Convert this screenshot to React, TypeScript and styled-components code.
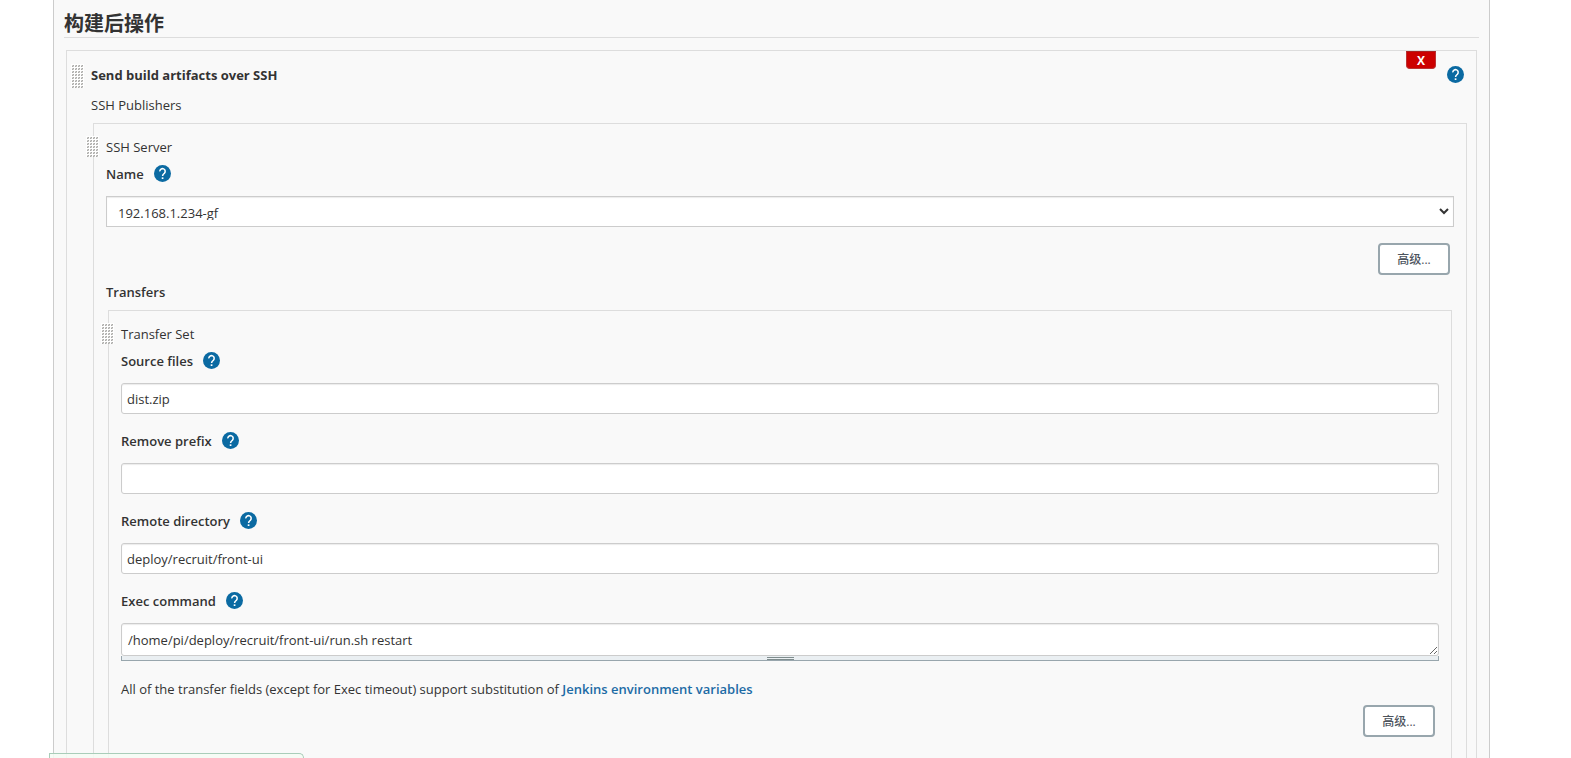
import React, { useId } from "react";
import styled, { createGlobalStyle } from "styled-components";

const GlobalStyle = createGlobalStyle`
  *, *::before, *::after { box-sizing: border-box; }
  body {
    margin: 0;
    background: #fff;
    color: #333;
    font: 13px/20px "Open Sans", "Noto Sans CJK SC", sans-serif;
  }
`;

const Page = styled.main`
  display: flex;
  flex-direction: column;
  min-height: 100vh;
  margin: 0 81px 0 53px;
  padding: 0 10px;
  background: #f9f9f9;
  border: solid #ccc;
  border-width: 0 1px;
`;

const SectionTitle = styled.h2`
  margin: 0 0 12px;
  padding: 10px 0 0;
  height: 38px;
  border-bottom: 1px solid #ddd;
  font-size: 20px;
  line-height: 28px;
  font-weight: 700;
`;

const Box = styled.section<{ $inset?: string }>`
  position: relative;
  flex: 1;
  display: flex;
  flex-direction: column;
  margin: ${(p) => p.$inset ?? "0 2px"};
  padding: 13px 12px 0;
  border: solid #ddd;
  border-width: 1px 1px 0;
`;

const StepBox = styled(Box)`
  padding: 14px 9px 0 24px;
`;

const Grip = styled.svg<{ $inner?: boolean }>`
  position: absolute;
  top: ${(p) => (p.$inner ? 12 : 13)}px;
  left: ${(p) => (p.$inner ? -8 : 4)}px;
`;

const StepTitle = styled.h3`
  margin: 0 0 10px;
  font-size: 13px;
  line-height: 20px;
  font-weight: 700;
`;

const Caption = styled.div<{ $strong?: boolean }>`
  line-height: 20px;
  font-weight: ${(p) => (p.$strong ? 600 : 400)};
`;

const DeleteButton = styled.button`
  position: absolute;
  top: 0;
  right: 40px;
  width: 30px;
  height: 18px;
  padding: 1px 0 0;
  border: 1px solid #b33;
  border-top-color: #a22;
  border-radius: 0 0 4px 4px;
  background: #c00;
  color: #fff;
  font: 700 12px/16px "Open Sans", sans-serif;
`;

const HelpButton = styled.button`
  display: block;
  width: 17px;
  height: 17px;
  padding: 0;
  border: 0;
  background: none;
`;

const StepHelp = styled.div`
  position: absolute;
  top: 15px;
  right: 12px;
`;

const FieldHead = styled.div`
  display: flex;
  align-items: center;
  gap: 10px;
  height: 24px;
  margin: 5px 0 10px;

  label { font-weight: 600; }
  button { margin-bottom: 2px; }
`;

const FieldGroup = styled.div`
  display: flex;
  flex-direction: column;
  margin-bottom: 10px;
`;

const TextInput = styled.input`
  width: 100%;
  height: 31px;
  padding: 0 5px;
  border: 1px solid #ccc;
  border-radius: 3px;
  background: #fff;
  box-shadow: inset 0 1px 1px rgba(0, 0, 0, 0.08);
  color: #333;
  font: inherit;
`;

const SelectWrap = styled.div`
  position: relative;
  display: flex;
`;

const Select = styled.select`
  appearance: none;
  width: 100%;
  height: 31px;
  padding: 6px 24px 6px 11px;
  border: 1px solid #ccc;
  border-radius: 0;
  background: #fff;
  box-shadow: inset 0 1px 1px rgba(0, 0, 0, 0.08);
  color: #333;
  font: inherit;
`;

const Chevron = styled.svg`
  position: absolute;
  right: 5px;
  top: 12px;
  pointer-events: none;
`;

const TextArea = styled.textarea`
  display: block;
  width: 100%;
  height: 33px;
  padding: 6px;
  border: 1px solid #ccc;
  border-radius: 3px;
  background: #fff;
  box-shadow: inset 0 1px 1px rgba(0, 0, 0, 0.08);
  color: #333;
  font: inherit;
  overflow: hidden;
  resize: vertical;
`;

const ResizeBar = styled.div`
  display: flex;
  flex-direction: column;
  align-items: center;
  gap: 1px;
  height: 5px;
  padding-top: 1px;
  border: solid #98a6ad;
  border-width: 0 1px 1px;
  background: #eaeff2;

  &::before, &::after {
    content: "";
    width: 27px;
    height: 1px;
    background: #7f8c8d;
  }
`;

const ButtonRow = styled.div`
  display: flex;
  justify-content: flex-end;
  padding: 6px 4px 7px 0;
`;

const AdvancedButton = styled.button`
  width: 72px;
  height: 32px;
  padding: 2px 0 0;
  border: 2px solid #98a6ad;
  border-radius: 4px;
  background: #fff;
  color: #4d545d;
  font: 500 12px/20px "Open Sans", "Noto Sans CJK SC", sans-serif;
`;

const Note = styled.p`
  margin: 8px 0 0;
  line-height: 20px;

  a {
    color: #1d6ba5;
    font-weight: 600;
    text-decoration: none;
  }
`;

const StatusBubble = styled.div`
  position: fixed;
  left: 49px;
  bottom: 0;
  width: 255px;
  height: 5px;
  border: solid #a9cdb9;
  border-width: 1px 1px 0;
  border-radius: 0 8px 0 0;
  background: rgba(246, 251, 244, 0.85);
`;

function DragGrip({ rows, inner }: { rows: number; inner?: boolean }) {
  const id = useId();
  return (
    <Grip $inner={inner} width="13" height={rows * 3} aria-hidden="true">
      <defs>
        <pattern id={id} width="3" height="3" patternUnits="userSpaceOnUse">
          <rect width="3" height="3" fill="#fff" />
          <rect x="1" y="1" width="2" height="2" fill="#d0cfcb" />
          <rect x="2" y="1" width="1" height="1" fill="#aaa" />
          <rect x="1" y="2" width="1" height="1" fill="#aaa" />
        </pattern>
      </defs>
      <rect width="13" height={rows * 3} fill={`url(#${id})`} />
    </Grip>
  );
}

function Help({ topic }: { topic: string }) {
  return (
    <HelpButton type="button" aria-label={`Help for ${topic}`}>
      <svg width="17" height="17" viewBox="0 0 24 24" display="block">
        <circle cx="12" cy="12" r="12" fill="#0b6aa2" />
        <path d="M8.2 9a3.8 3.8 0 1 1 6.3 2.8c-1.5 1.2-2.4 1.8-2.4 3.6" fill="none" stroke="#fff" strokeWidth="2.2" />
        <path d="M10.9 17.4h2.4v2.4h-2.4z" fill="#fff" />
      </svg>
    </HelpButton>
  );
}

function FieldLabel({ id, text }: { id: string; text: string }) {
  return (
    <FieldHead>
      <label htmlFor={id}>{text}</label>
      <Help topic={text} />
    </FieldHead>
  );
}

const transferFields = [
  { id: "source", label: "Source files", value: "dist.zip" },
  { id: "prefix", label: "Remove prefix", value: "" },
  { id: "remote", label: "Remote directory", value: "deploy/recruit/front-ui" },
];

export default function App() {
  return (
    <>
      <GlobalStyle />
      <Page>
        <SectionTitle>构建后操作</SectionTitle>
        <StepBox>
          <DragGrip rows={8} />
          <DeleteButton type="button">X</DeleteButton>
          <StepHelp>
            <Help topic="Send build artifacts over SSH" />
          </StepHelp>
          <StepTitle>Send build artifacts over SSH</StepTitle>
          <Caption>SSH Publishers</Caption>
          <Box $inset="8px 0 0 2px">
            <DragGrip rows={7} inner />
            <Caption>SSH Server</Caption>
            <FieldGroup>
              <FieldLabel id="server" text="Name" />
              <SelectWrap>
                <Select id="server" defaultValue="gf">
                  <option value="gf">192.168.1.234-gf</option>
                </Select>
                <Chevron width="10" height="7" viewBox="0 0 10 7">
                  <path d="M1 1l4 4 4-4" fill="none" stroke="#333" strokeWidth="2" />
                </Chevron>
              </SelectWrap>
            </FieldGroup>
            <ButtonRow>
              <AdvancedButton type="button">高级...</AdvancedButton>
            </ButtonRow>
            <Caption $strong>Transfers</Caption>
            <Box $inset="8px 2px 0">
              <DragGrip rows={7} inner />
              <Caption>Transfer Set</Caption>
              {transferFields.map((f) => (
                <FieldGroup key={f.id}>
                  <FieldLabel id={f.id} text={f.label} />
                  <TextInput id={f.id} type="text" defaultValue={f.value} />
                </FieldGroup>
              ))}
              <FieldGroup>
                <FieldLabel id="exec" text="Exec command" />
                <TextArea id="exec" rows={1} defaultValue="/home/pi/deploy/recruit/front-ui/run.sh restart" />
                <ResizeBar />
              </FieldGroup>
              <Note>
                All of the transfer fields (except for Exec timeout) support substitution of{" "}
                <a href="#env">Jenkins environment variables</a>
              </Note>
              <ButtonRow>
                <AdvancedButton type="button">高级...</AdvancedButton>
              </ButtonRow>
            </Box>
          </Box>
        </StepBox>
      </Page>
      <StatusBubble />
    </>
  );
}
